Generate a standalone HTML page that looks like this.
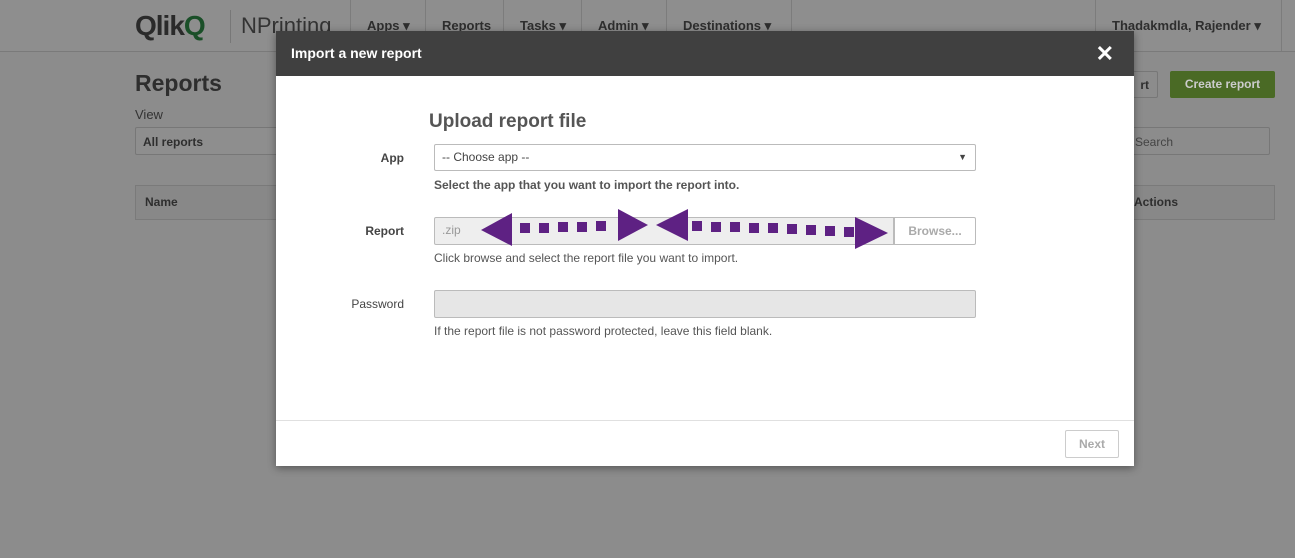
<!DOCTYPE html>
<html><head><style>
body{margin:0;width:1295px;height:558px;background:#8c8c8c;font-family:"Liberation Sans",sans-serif;position:relative;overflow:hidden}
.a{position:absolute}
.hdr{left:0;top:0;width:1295px;height:51px;background:#8e8e8e;border-bottom:1px solid #7a7a7a}
.nav{top:0;height:51px;border-left:1px solid #7c7c7c;font-weight:bold;font-size:13px;color:#2e2e2e;line-height:51px;padding:0 16px}
.m{left:276px;top:31px;width:858px;height:435px;background:#fff;box-shadow:0 2px 8px rgba(0,0,0,.4)}
.mh{left:0;top:0;width:858px;height:45px;background:#404040;color:#fff;font-weight:bold;font-size:14px;line-height:45px;padding-left:15px;box-sizing:border-box}
.lbl{font-size:12px;color:#444;text-align:right;width:128px;left:0}
.in{left:158px;width:542px;height:27px;border:1px solid #bbb;border-radius:2px;box-sizing:border-box;font-size:12px;color:#444;line-height:25px;padding-left:7px}
.hint{left:158px;font-size:12px;color:#555}
</style></head><body>
<div class="a hdr"></div>
<div class="a" style="left:135px;top:10px;font-size:28px;font-weight:bold;color:#2a2a2a;letter-spacing:-1px">Qlik<span style="color:#1a4f28">Q</span></div>
<div class="a" style="left:230px;top:10px;width:1px;height:33px;background:#777"></div>
<div class="a" style="left:241px;top:13px;font-size:22px;color:#333">NPrinting</div>
<div class="a nav" style="left:350px">Apps ▾</div>
<div class="a nav" style="left:425px">Reports</div>
<div class="a nav" style="left:503px">Tasks ▾</div>
<div class="a nav" style="left:581px">Admin ▾</div>
<div class="a nav" style="left:666px;border-right:1px solid #7c7c7c;padding-right:20px">Destinations ▾</div>
<div class="a nav" style="left:1095px;border-right:1px solid #7c7c7c;padding-right:20px">Thadakmdla, Rajender ▾</div>
<div class="a" style="left:135px;top:70px;font-size:23px;font-weight:bold;color:#2e2e2e">Reports</div>
<div class="a" style="left:135px;top:107px;font-size:13px;color:#333">View</div>
<div class="a" style="left:135px;top:127px;width:200px;height:28px;border:1px solid #777;border-radius:2px;background:#8e8e8e;font-size:12px;font-weight:bold;color:#2e2e2e;line-height:28px;padding-left:7px;box-sizing:border-box">All reports</div>
<div class="a" style="left:135px;top:185px;width:1140px;height:35px;background:#888;border:1px solid #7a7a7a;box-sizing:border-box;font-size:12px;font-weight:bold;color:#2e2e2e;line-height:33px;padding-left:9px">Name</div>
<div class="a" style="left:1134px;top:185px;font-size:12px;font-weight:bold;color:#2e2e2e;line-height:35px">Actions</div>
<div class="a" style="left:1100px;top:71px;width:58px;height:27px;border:1px solid #777;border-radius:2px;font-size:12px;font-weight:bold;color:#2e2e2e;line-height:27px;text-align:right;padding-right:8px;box-sizing:border-box">rt</div>
<div class="a" style="left:1170px;top:71px;width:105px;height:27px;background:#4a6a25;border-radius:2px;font-size:12px;font-weight:bold;color:#ccc;line-height:27px;text-align:center">Create report</div>
<div class="a" style="left:1100px;top:127px;width:170px;height:28px;border:1px solid #777;border-radius:2px;font-size:12px;color:#444;line-height:28px;padding-left:34px;box-sizing:border-box">Search</div>
<div class="a m">
<div class="a mh">Import a new report</div>
<div class="a" style="right:20px;top:10px;color:#fff;font-size:22px;font-weight:bold">✕</div>
<div class="a" style="left:153px;top:80px;font-size:19px;font-weight:bold;color:#555">Upload report file</div>
<div class="a lbl" style="top:120px;font-weight:bold">App</div>
<div class="a in" style="top:113px">-- Choose app --<span style="position:absolute;right:8px;font-size:9px">▼</span></div>
<div class="a hint" style="top:147px;font-weight:bold">Select the app that you want to import the report into.</div>
<div class="a lbl" style="top:193px;font-weight:bold">Report</div>
<div class="a in" style="top:186px;width:460px;height:28px;background:#eee;color:#999;border-radius:2px 0 0 2px">.zip</div>
<div class="a" style="left:618px;top:186px;width:82px;height:28px;border:1px solid #bbb;border-radius:0 2px 2px 0;box-sizing:border-box;font-size:12px;font-weight:bold;color:#aaa;line-height:26px;text-align:center">Browse...</div>
<div class="a hint" style="top:220px">Click browse and select the report file you want to import.</div>
<div class="a lbl" style="top:266px">Password</div>
<div class="a in" style="top:259px;height:28px;background:#e6e6e6"></div>
<div class="a hint" style="top:293px">If the report file is not password protected, leave this field blank.</div>
<div class="a" style="left:0;top:389px;width:858px;height:1px;background:#e0e0e0"></div>
<div class="a" style="left:789px;top:399px;width:54px;height:28px;border:1px solid #ccc;border-radius:2px;box-sizing:border-box;font-size:12px;font-weight:bold;color:#aaa;line-height:26px;text-align:center">Next</div>
</div>
<svg class="a" style="left:0;top:0" width="1295" height="558">
<g fill="#5e2183">
<polygon points="481,230 512,213 512,246"/>
<rect x="520" y="223" width="10" height="10"/><rect x="539" y="223" width="10" height="10"/><rect x="558" y="222" width="10" height="10"/><rect x="577" y="222" width="10" height="10"/><rect x="596" y="221" width="10" height="10"/>
<polygon points="648,225 618,209 618,241"/>
<polygon points="656,225 688,209 688,241"/>
<rect x="692" y="221" width="10" height="10"/><rect x="711" y="222" width="10" height="10"/><rect x="730" y="222" width="10" height="10"/><rect x="749" y="223" width="10" height="10"/><rect x="768" y="223" width="10" height="10"/><rect x="787" y="224" width="10" height="10"/><rect x="806" y="225" width="10" height="10"/><rect x="825" y="226" width="10" height="10"/><rect x="844" y="227" width="10" height="10"/>
<polygon points="888,233 855,217 855,249"/>
</g></svg>
</body></html>
